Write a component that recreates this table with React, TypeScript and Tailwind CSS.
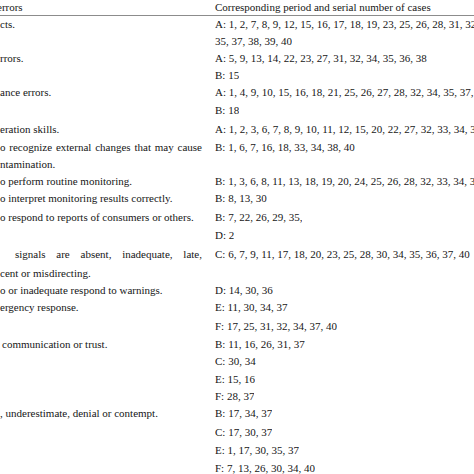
import React from "react";

type Line = { l?: string; r?: string; j?: boolean; pl?: number; h: string };

const lines: Line[] = [
  { l: "cts.", r: "A: 1, 2, 7, 8, 9, 12, 15, 16, 17, 18, 19, 23, 25, 26, 28, 31, 32", h: "h-[17px] leading-[17px]" },
  { r: "35, 37, 38, 39, 40", h: "h-[17px] leading-[17px]" },
  { l: "rrors.", r: "A: 5, 9, 13, 14, 22, 23, 27, 31, 32, 34, 35, 36, 38", h: "h-[17px] leading-[17px]" },
  { r: "B: 15", h: "h-[17px] leading-[17px]" },
  { l: "ance errors.", r: "A: 1, 4, 9, 10, 15, 16, 18, 21, 25, 26, 27, 28, 32, 34, 35, 37, 39", h: "h-[17px] leading-[17px]" },
  { r: "B: 18", h: "h-[18.5px] leading-[18.5px]" },
  { l: "eration skills.", r: "A: 1, 2, 3, 6, 7, 8, 9, 10, 11, 12, 15, 20, 22, 27, 32, 33, 34, 35, 36", h: "h-[19px] leading-[19px]" },
  { l: "o recognize external changes that may cause", j: true, r: "B: 1, 6, 7, 16, 18, 33, 34, 38, 40", h: "h-[17px] leading-[17px]" },
  { l: "ntamination.", h: "h-[17px] leading-[17px]" },
  { l: "o perform routine monitoring.", r: "B: 1, 3, 6, 8, 11, 13, 18, 19, 20, 24, 25, 26, 28, 32, 33, 34, 35", h: "h-[17.5px] leading-[17.5px]" },
  { l: "o interpret monitoring results correctly.", r: "B: 8, 13, 30", h: "h-[17.5px] leading-[17.5px]" },
  { l: "o respond to reports of consumers or others.", r: "B: 7, 22, 26, 29, 35,", h: "h-[18px] leading-[18px]" },
  { r: "D: 2", h: "h-[19px] leading-[19px]" },
  { l: "signals are absent, inadequate, late,", j: true, pl: 15, r: "C: 6, 7, 9, 11, 17, 18, 20, 23, 25, 28, 30, 34, 35, 36, 37, 40", h: "h-[19px] leading-[19px]" },
  { l: "cent or misdirecting.", h: "h-[18px] leading-[18px]" },
  { l: "o or inadequate respond to warnings.", r: "D: 14, 30, 36", h: "h-[17.5px] leading-[17.5px]" },
  { l: "ergency response.", r: "E: 11, 30, 34, 37", h: "h-[17.5px] leading-[17.5px]" },
  { r: "F: 17, 25, 31, 32, 34, 37, 40", h: "h-[18px] leading-[18px]" },
  { l: "communication or trust.", pl: 2, r: "B: 11, 16, 26, 31, 37", h: "h-[18.5px] leading-[18.5px]" },
  { r: "C: 30, 34", h: "h-[17.5px] leading-[17.5px]" },
  { r: "E: 15, 16", h: "h-[17px] leading-[17px]" },
  { r: "F: 28, 37", h: "h-[17.5px] leading-[17.5px]" },
  { l: ", underestimate, denial or contempt.", r: "B: 17, 34, 37", h: "h-[17.5px] leading-[17.5px]" },
  { r: "C: 17, 30, 37", h: "h-[18px] leading-[18px]" },
  { r: "E: 1, 17, 30, 35, 37", h: "h-[18px] leading-[18px]" },
  { r: "F: 7, 13, 26, 30, 34, 40", h: "h-[18px] leading-[18px]" },
];

export default function App() {
  return (
    <div
      className="w-[474px] h-[474px] overflow-hidden bg-white text-[#161616] text-[11px]"
      style={{ fontFamily: '"Liberation Serif", "Times New Roman", serif' }}
    >
      <div className="flex h-[14.5px] leading-[15px] whitespace-nowrap">
        <div className="w-[215px] shrink-0 -ml-[3px]">errors</div>
        <div className="ml-[3px]">Corresponding period and serial number of cases</div>
      </div>
      <div className="h-[1.5px] bg-[#8c8c8c]" />
      {lines.map((ln, i) => (
        <div key={i} className={`flex whitespace-nowrap ${ln.h}`}>
          <div className="w-[215px] shrink-0">
            {ln.l &&
              (ln.j ? (
                <div
                  className="w-[202px] flex justify-between"
                  style={{ paddingLeft: ln.pl ?? 0 }}
                >
                  {ln.l.split(" ").map((w, k) => (
                    <span key={k}>{w}</span>
                  ))}
                </div>
              ) : (
                <div style={{ paddingLeft: ln.pl ?? 0 }}>{ln.l}</div>
              ))}
          </div>
          <div className="overflow-hidden">{ln.r}</div>
        </div>
      ))}
    </div>
  );
}
